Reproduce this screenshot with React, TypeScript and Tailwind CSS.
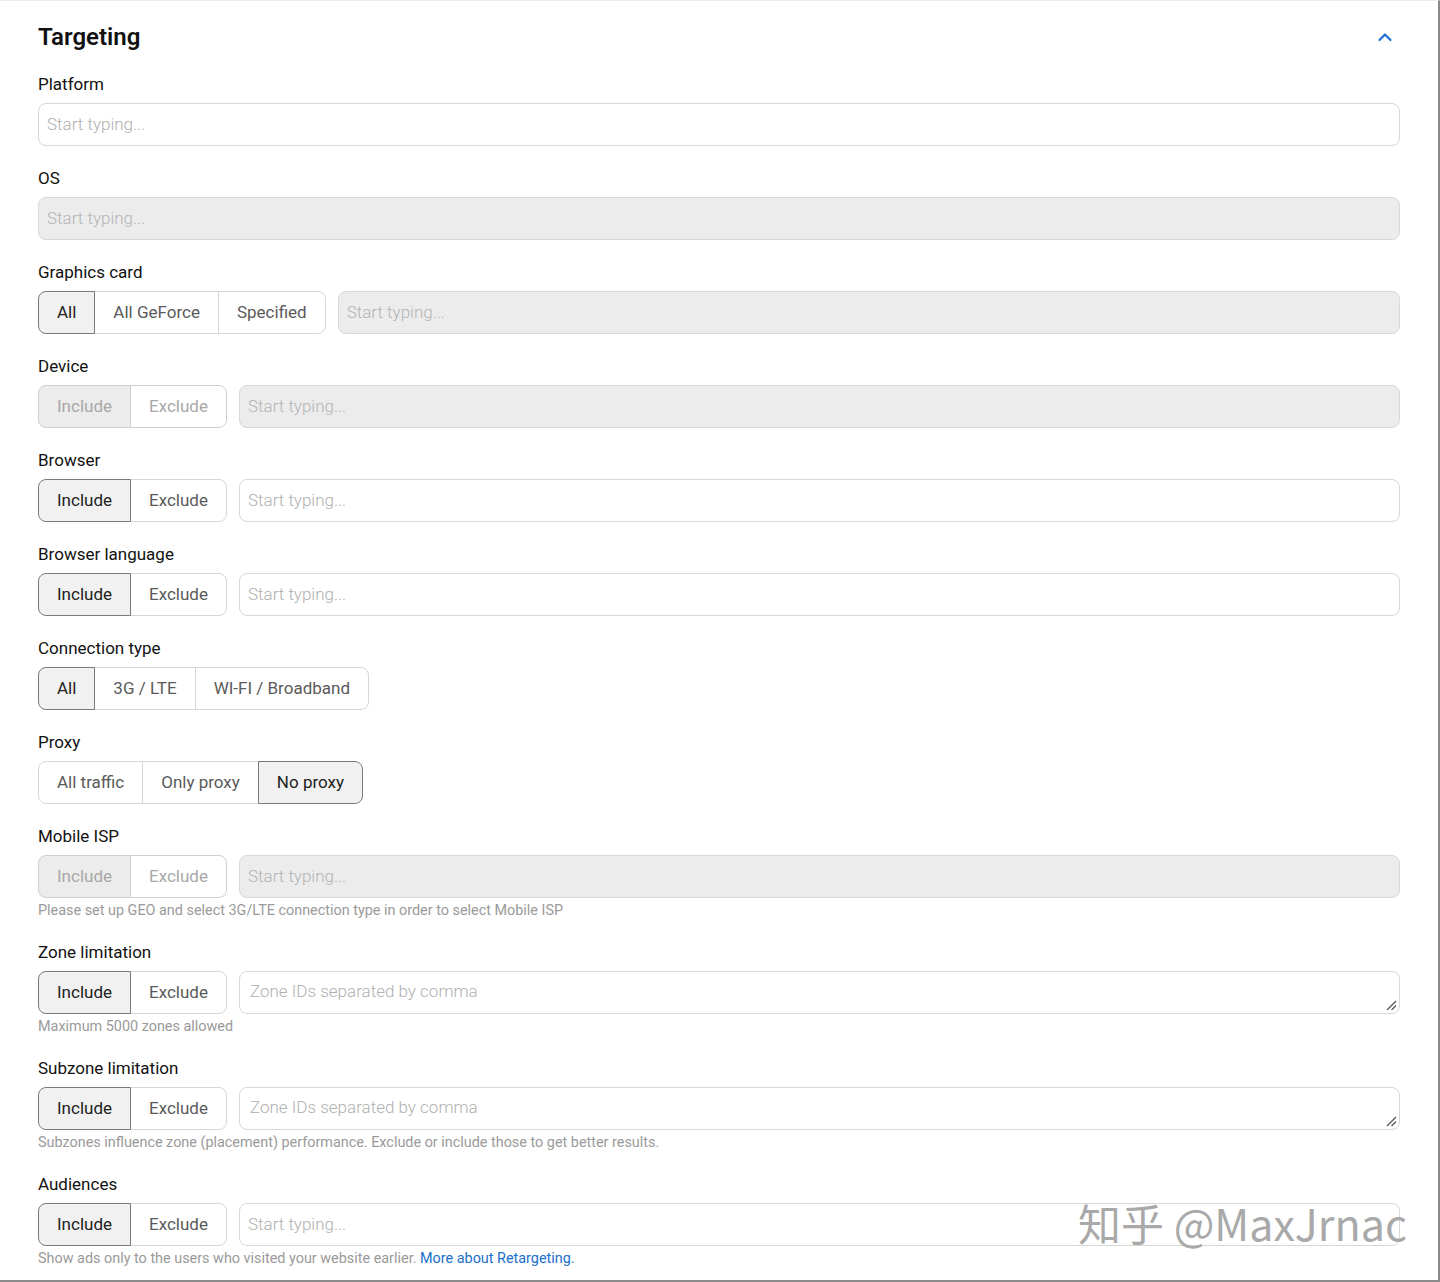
import React from "react";

type Seg = { label: string; active?: boolean };

const FONT = { fontFamily: "Roboto, 'Liberation Sans', Arial, sans-serif" };

function Segments({ items, disabled }: { items: Seg[]; disabled?: boolean }) {
  return (
    <div className="flex h-[43px] shrink-0">
      {items.map((s, i) => {
        const first = i === 0;
        const last = i === items.length - 1;
        let cls = "flex items-center justify-center px-[18px] text-[17px] border ";
        if (first) cls += "rounded-l-[8px] ";
        if (last) cls += "rounded-r-[8px] ";
        if (!first) cls += "-ml-px ";
        if (disabled) {
          cls += s.active
            ? "bg-[#ececec] border-[#cfcfcf] text-[#a8a8a8]"
            : "bg-white border-[#cfcfcf] text-[#a8a8a8]";
        } else if (s.active) {
          cls += "bg-[#f1f1f1] border-[#7a7a7a] text-[#222] z-10";
        } else {
          cls += "bg-white border-[#d6d6d6] text-[#5a5a5a]";
        }
        return (
          <div key={s.label} className={cls}>
            {s.label}
          </div>
        );
      })}
    </div>
  );
}

function Input({ placeholder = "Start typing...", disabled }: { placeholder?: string; disabled?: boolean }) {
  return (
    <div
      className={
        "flex-1 h-[43px] rounded-[8px] border flex items-center px-[8px] text-[17px] font-light " +
        (disabled ? "bg-[#ececec] border-[#d8d8d8] text-[#b4b4b4]" : "bg-white border-[#d8d8d8] text-[#b0b0b0]")
      }
    >
      {placeholder}
    </div>
  );
}

function Textarea({ placeholder }: { placeholder: string }) {
  return (
    <div className="relative flex-1 h-[43px] rounded-[8px] border border-[#d8d8d8] bg-white px-[10px] pt-[7px] text-[17px] font-light text-[#b0b0b0]">
      {placeholder}
      <svg className="absolute right-[2px] bottom-[2px]" width="12" height="12" viewBox="0 0 12 12">
        <line x1="11" y1="2" x2="2" y2="11" stroke="#555" strokeWidth="1.2" />
        <line x1="11" y1="6.5" x2="6.5" y2="11" stroke="#555" strokeWidth="1.2" />
      </svg>
    </div>
  );
}

function Field({ label, help, children }: { label: string; help?: React.ReactNode; children: React.ReactNode }) {
  return (
    <div className="mb-[20px]">
      <div className="h-[24px] leading-[24px] text-[17px] text-[#111] mb-[7px]">{label}</div>
      <div className="flex gap-[12px]">{children}</div>
      {help && <div className="mt-[4px] h-[18px] leading-[18px] text-[14.4px] text-[#9a9a9a]">{help}</div>}
    </div>
  );
}

const incExc = (active: boolean): Seg[] => [{ label: "Include", active }, { label: "Exclude" }];

export default function App() {
  return (
    <div
      style={FONT}
      className="relative w-[1440px] h-[1282px] bg-white border-t border-t-[#eeeeee] border-r-2 border-r-[#8a8a8a] border-b-2 border-b-[#8a8a8a] overflow-hidden"
    >
      <div className="pl-[38px] pr-[38px] pt-[20px]">
        <div className="flex items-center justify-between h-[32px] mb-[19px]">
          <h2 className="text-[24px] font-semibold text-[#111]">Targeting</h2>
          <svg width="16" height="16" viewBox="0 0 16 16" className="mr-[7px]">
            <polyline points="2.5,11 8,5.5 13.5,11" fill="none" stroke="#1f6fd1" strokeWidth="2.2" strokeLinecap="round" strokeLinejoin="round" />
          </svg>
        </div>

        <Field label="Platform">
          <Input />
        </Field>
        <Field label="OS">
          <Input disabled />
        </Field>
        <Field label="Graphics card">
          <Segments items={[{ label: "All", active: true }, { label: "All GeForce" }, { label: "Specified" }]} />
          <Input disabled />
        </Field>
        <Field label="Device">
          <Segments disabled items={incExc(true)} />
          <Input disabled />
        </Field>
        <Field label="Browser">
          <Segments items={incExc(true)} />
          <Input />
        </Field>
        <Field label="Browser language">
          <Segments items={incExc(true)} />
          <Input />
        </Field>
        <Field label="Connection type">
          <Segments items={[{ label: "All", active: true }, { label: "3G / LTE" }, { label: "WI-FI / Broadband" }]} />
        </Field>
        <Field label="Proxy">
          <Segments items={[{ label: "All traffic" }, { label: "Only proxy" }, { label: "No proxy", active: true }]} />
        </Field>
        <Field label="Mobile ISP" help="Please set up GEO and select 3G/LTE connection type in order to select Mobile ISP">
          <Segments disabled items={incExc(true)} />
          <Input disabled />
        </Field>
        <Field label="Zone limitation" help="Maximum 5000 zones allowed">
          <Segments items={incExc(true)} />
          <Textarea placeholder="Zone IDs separated by comma" />
        </Field>
        <Field
          label="Subzone limitation"
          help="Subzones influence zone (placement) performance. Exclude or include those to get better results."
        >
          <Segments items={incExc(true)} />
          <Textarea placeholder="Zone IDs separated by comma" />
        </Field>
        <Field
          label="Audiences"
          help={
            <>
              Show ads only to the users who visited your website earlier.{" "}
              <span className="text-[#1a6fc9]">More about Retargeting.</span>
            </>
          }
        >
          <Segments items={incExc(true)} />
          <Input />
        </Field>
      </div>

      <div
        className="absolute left-[1078px] top-[1195px] text-[43px] leading-[52px] text-[#a9a9a9] whitespace-nowrap pointer-events-none"
        style={{ fontFamily: "'Noto Sans CJK SC', 'Noto Sans', sans-serif" }}
      >
        知乎 @MaxJrnac
      </div>
    </div>
  );
}
